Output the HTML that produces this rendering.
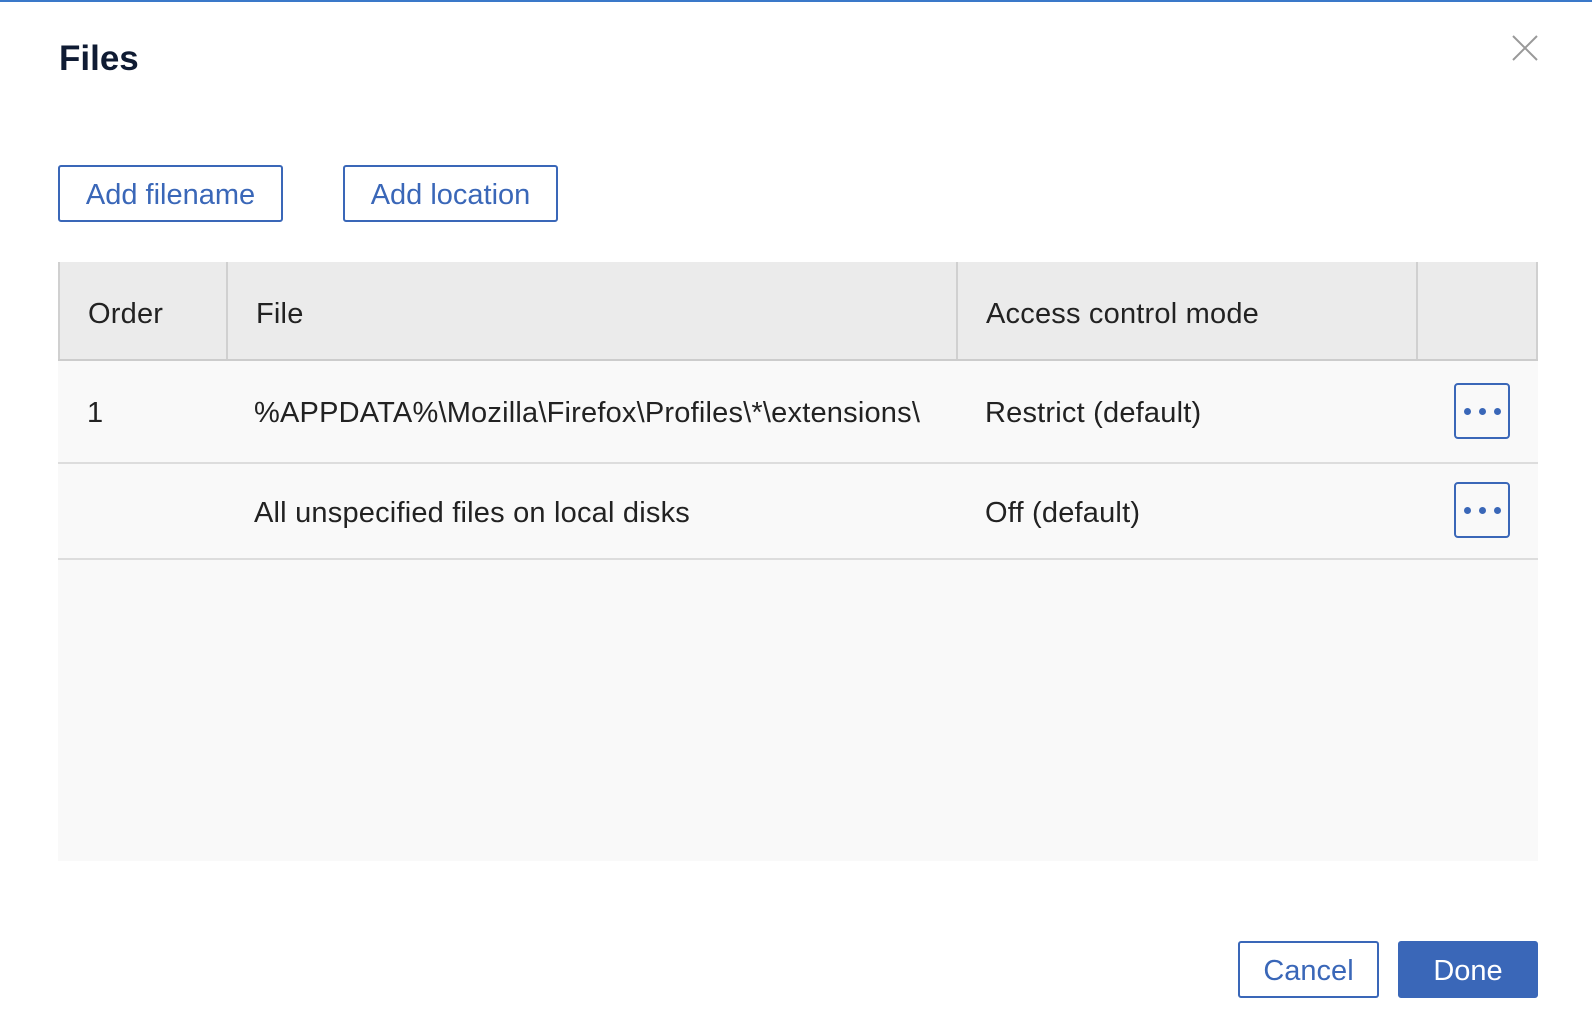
<!DOCTYPE html>
<html><head><style>
body{margin:0;width:1592px;height:1032px;background:#fff;font-family:"Liberation Sans",sans-serif;position:relative;overflow:hidden;color:#222}
.a{position:absolute}
.btn{position:absolute;box-sizing:border-box;border:2px solid #3a67b8;border-radius:3px;color:#3a67b8;font-size:29px;display:flex;align-items:center;justify-content:center;background:#fff;padding-top:3px}
.t{position:absolute;font-size:29px;line-height:1;letter-spacing:0.2px}
.dots{position:absolute;box-sizing:border-box;width:56px;height:56px;border:2px solid #3a67b8;border-radius:4px;display:flex;align-items:center;justify-content:center;gap:8px}
.dots i{width:7px;height:7px;border-radius:50%;background:#3a67b8;display:block}
</style></head><body>
<div class="a" style="left:0;top:0;width:1592px;height:2px;background:#3a78c9"></div>
<div class="a" style="left:59px;top:39px;font-size:35px;font-weight:bold;color:#0f1b33">Files</div>
<svg class="a" style="left:1512px;top:35px" width="26" height="26"><path d="M1 1L25 25M25 1L1 25" stroke="#999" stroke-width="2"/></svg>
<div class="btn" style="left:58px;top:165px;width:225px;height:57px">Add filename</div>
<div class="btn" style="left:343px;top:165px;width:215px;height:57px">Add location</div>
<div class="a" style="left:58px;top:262px;width:1480px;height:599px;background:#f9f9f9"></div>
<div class="a" style="left:58px;top:262px;width:1480px;height:97px;background:#ebebeb;border-bottom:2px solid #ccc"></div>
<div class="a" style="left:58px;top:262px;width:2px;height:97px;background:#d0d0d0"></div>
<div class="a" style="left:226px;top:262px;width:2px;height:97px;background:#d0d0d0"></div>
<div class="a" style="left:956px;top:262px;width:2px;height:97px;background:#d0d0d0"></div>
<div class="a" style="left:1416px;top:262px;width:2px;height:97px;background:#d0d0d0"></div>
<div class="a" style="left:1536px;top:262px;width:2px;height:97px;background:#d0d0d0"></div>
<div class="a" style="left:58px;top:462px;width:1480px;height:2px;background:#ddd"></div>
<div class="a" style="left:58px;top:558px;width:1480px;height:2px;background:#ddd"></div>
<div class="t" style="left:88px;top:300px">Order</div>
<div class="t" style="left:256px;top:300px">File</div>
<div class="t" style="left:986px;top:300px">Access control mode</div>
<div class="t" style="left:87px;top:399px">1</div>
<div class="t" style="left:254px;top:399px">%APPDATA%\Mozilla\Firefox\Profiles\*\extensions\</div>
<div class="t" style="left:985px;top:399px">Restrict (default)</div>
<div class="t" style="left:254px;top:499px">All unspecified files on local disks</div>
<div class="t" style="left:985px;top:499px">Off (default)</div>
<div class="dots" style="left:1454px;top:383px"><i></i><i></i><i></i></div>
<div class="dots" style="left:1454px;top:482px"><i></i><i></i><i></i></div>
<div class="btn" style="left:1238px;top:941px;width:141px;height:57px">Cancel</div>
<div class="btn" style="left:1398px;top:941px;width:140px;height:57px;background:#3a67b8;color:#fff">Done</div>
</body></html>
